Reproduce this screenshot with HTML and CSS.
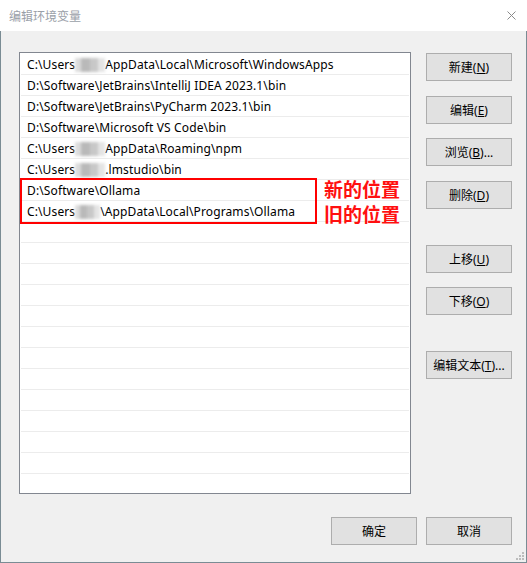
FILE: index.html
```html
<!DOCTYPE html>
<html lang="zh-CN">
<head>
<meta charset="utf-8">
<title>编辑环境变量</title>
<link rel="stylesheet" href="styles.css">
</head>
<body>
<div class="window">
  <div class="titlebar">
    <span class="title">编辑环境变量</span>
    <svg class="close" width="9" height="9" viewBox="0 0 9 9"><path d="M0.5 0.5 L8.5 8.5 M8.5 0.5 L0.5 8.5" stroke="#8a8a8a" stroke-width="1" fill="none"/></svg>
  </div>
  <div class="content">
    <div class="main">
      <div class="list">
        <div class="row">C:\Users<span class="blur"></span>AppData\Local\Microsoft\WindowsApps</div>
        <div class="row">D:\Software\JetBrains\IntelliJ IDEA 2023.1\bin</div>
        <div class="row">D:\Software\JetBrains\PyCharm 2023.1\bin</div>
        <div class="row">D:\Software\Microsoft VS Code\bin</div>
        <div class="row">C:\Users<span class="blur"></span>AppData\Roaming\npm</div>
        <div class="row">C:\Users<span class="blur"></span>.lmstudio\bin</div>
        <div class="row">D:\Software\Ollama</div>
        <div class="row">C:\Users<span class="blur blur-short"></span>\AppData\Local\Programs\Ollama</div>
        <div class="row"></div>
        <div class="row"></div>
        <div class="row"></div>
        <div class="row"></div>
        <div class="row"></div>
        <div class="row"></div>
        <div class="row"></div>
        <div class="row"></div>
        <div class="row"></div>
        <div class="row"></div>
        <div class="row"></div>
        <div class="row"></div>
        <div class="row"></div>
        <div class="mark"></div>
        <div class="note note-new">新的位置</div>
        <div class="note note-old">旧的位置</div>
      </div>
      <div class="side">
        <button class="btn b-new">新建(<u>N</u>)</button>
        <button class="btn b-edit">编辑(<u>E</u>)</button>
        <button class="btn b-browse">浏览(<u>B</u>)...</button>
        <button class="btn b-del">删除(<u>D</u>)</button>
        <button class="btn b-up">上移(<u>U</u>)</button>
        <button class="btn b-down">下移(<u>O</u>)</button>
        <button class="btn b-text">编辑文本(<u>T</u>)...</button>
      </div>
    </div>
    <div class="footer">
      <button class="btn">确定</button>
      <button class="btn">取消</button>
    </div>
    <svg class="grip" width="8" height="8" viewBox="0 0 8 8">
      <rect x="6" y="0" width="2" height="2" fill="#bcbcbc"/>
      <rect x="3" y="3" width="2" height="2" fill="#bcbcbc"/>
      <rect x="6" y="3" width="2" height="2" fill="#bcbcbc"/>
      <rect x="0" y="6" width="2" height="2" fill="#bcbcbc"/>
      <rect x="3" y="6" width="2" height="2" fill="#bcbcbc"/>
      <rect x="6" y="6" width="2" height="2" fill="#bcbcbc"/>
    </svg>
  </div>
</div>
</body>
</html>
```
FILE: styles.css
```css
html, body {
  margin: 0;
  padding: 0;
  background: #f0f0f0;
}

body {
  font-family: "Noto Sans", "Noto Sans CJK SC", sans-serif;
  font-size: 12px;
  color: #000;
}

.window {
  width: 527px;
  height: 563px;
  display: flex;
  flex-direction: column;
  box-sizing: border-box;
}

.titlebar {
  height: 31px;
  flex: none;
  background: #fff;
  display: flex;
  align-items: center;
  justify-content: space-between;
  padding: 0 11px 0 9px;
  box-sizing: border-box;
}

.title {
  font-family: "Noto Sans CJK SC", sans-serif;
  font-size: 12px;
  color: #9aa0a8;
}

.close {
  display: block;
}

.content {
  flex: 1;
  position: relative;
  background: #f0f0f0;
  border: 1px solid #7a8c94;
  border-top: none;
  padding: 21px 14px 0 18px;
  display: flex;
  flex-direction: column;
}

.main {
  display: flex;
  gap: 15px;
}

.list {
  position: relative;
  width: 392px;
  height: 442px;
  box-sizing: border-box;
  border: 1px solid #828790;
  background: #fff;
  padding-top: 1px;
  overflow: hidden;
}

.row {
  height: 20px;
  margin: 0 1px;
  border-bottom: 1px solid #ececec;
  padding-left: 6px;
  line-height: 21px;
  letter-spacing: 0.12px;
  white-space: nowrap;
}

.blur {
  display: inline-block;
  width: 30px;
  height: 14px;
  vertical-align: -3px;
  background:
    linear-gradient(90deg, #dcdcdc 0 20%, #b9b9b9 20% 50%, #c8c8c8 50% 78%, #e4e4e4 78%);
  filter: blur(1.6px);
}

.blur-short {
  width: 25px;
}

.mark {
  position: absolute;
  left: 0;
  top: 125px;
  width: 297px;
  height: 46px;
  box-sizing: border-box;
  border: 2px solid #ff0000;
}

.note {
  position: absolute;
  left: 304px;
  font-family: "Noto Sans CJK SC", sans-serif;
  font-weight: 700;
  font-size: 19px;
  line-height: 19px;
  color: #ff1010;
  white-space: nowrap;
}

.note-new {
  top: 126px;
}

.note-old {
  top: 151px;
}

.side {
  width: 86px;
  display: flex;
  flex-direction: column;
}

.btn {
  width: 86px;
  height: 28px;
  box-sizing: border-box;
  border: 1px solid #adadad;
  background: #e1e1e1;
  font-family: "Noto Sans", "Noto Sans CJK SC", sans-serif;
  font-size: 12px;
  color: #000;
  padding: 0;
  margin: 0;
  border-radius: 0;
}

.btn u {
  text-underline-offset: 1px;
}

.b-new { margin-top: 1px; }
.b-edit { margin-top: 15px; }
.b-browse { margin-top: 14px; }
.b-del { margin-top: 15px; }
.b-up { margin-top: 36px; }
.b-down { margin-top: 14px; }
.b-text { margin-top: 36px; }

.footer {
  margin-top: 23px;
  display: flex;
  justify-content: flex-end;
  gap: 9px;
}

.grip {
  position: absolute;
  right: 2px;
  bottom: 2px;
}
```
